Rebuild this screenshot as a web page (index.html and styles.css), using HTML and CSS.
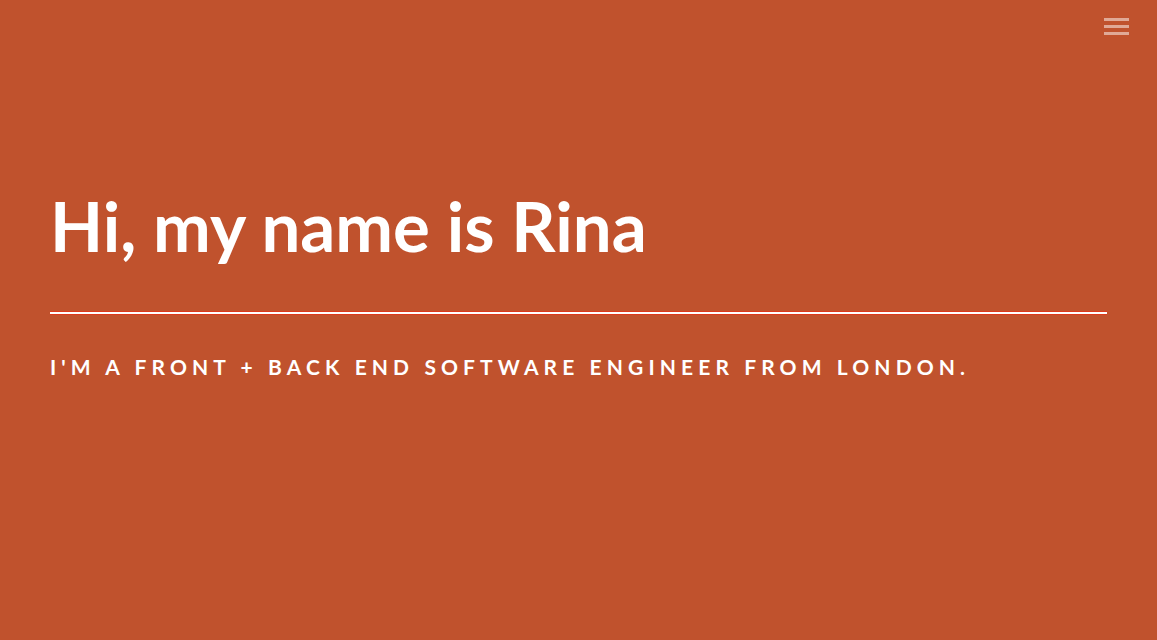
FILE: index.html
```html
<!DOCTYPE html>
<html lang="en">
<head>
<meta charset="utf-8">
<title>Rina</title>
<link rel="stylesheet" href="styles.css">
</head>
<body>
<header class="topbar">
  <button class="menu" aria-label="Menu">
    <span class="bar"></span><span class="bar"></span><span class="bar"></span>
  </button>
</header>
<main class="hero">
  <h1 class="title">Hi, my name is Rina</h1>
  <hr class="rule">
  <p class="subtitle">I'm a front + back end software engineer from London.</p>
</main>
</body>
</html>
```
FILE: styles.css
```css
html, body {
  margin: 0;
  padding: 0;
  height: 100%;
}
body {
  background: #c0522d;
  color: #ffffff;
  font-family: "Lato", "Open Sans", sans-serif;
}
.topbar {
  display: flex;
  justify-content: flex-end;
  padding: 18px 28px 0 0;
}
.menu {
  display: flex;
  flex-direction: column;
  gap: 4px;
  width: 25px;
  padding: 0;
  border: 0;
  background: none;
  cursor: pointer;
}
.bar {
  display: block;
  height: 3px;
  width: 25px;
  background: rgba(255, 255, 255, 0.5);
}
.hero {
  padding: 150px 50px 0 50px;
}
.title {
  margin: 0;
  font-size: 69px;
  font-weight: 700;
  line-height: 1.2;
  letter-spacing: 0;
}
.rule {
  margin: 43px 0 0 0;
  border: 0;
  height: 2px;
  background: #ffffff;
  border-top: 1px solid #dc3a1c;
  border-bottom: 1px solid #dc3a1c;
  box-sizing: content-box;
}
.subtitle {
  margin: 39px 0 0 0;
  font-size: 21px;
  font-weight: 700;
  text-transform: uppercase;
  letter-spacing: 0.243em;
}
```
